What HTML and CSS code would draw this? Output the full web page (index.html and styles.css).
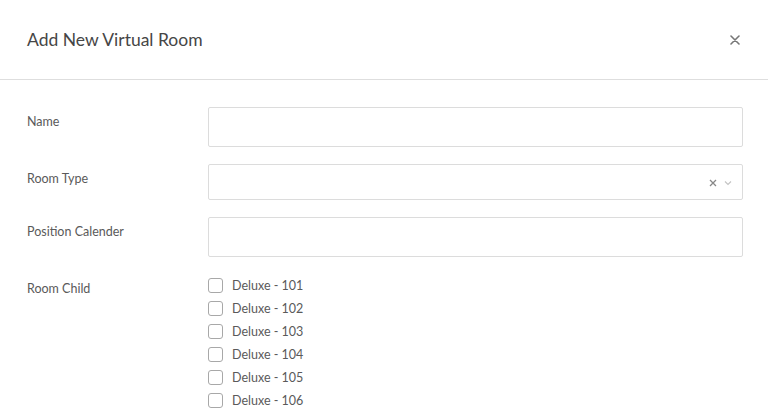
FILE: index.html
```html
<!DOCTYPE html>
<html>
<head>
<meta charset="utf-8">
<link rel="stylesheet" href="styles.css">
</head>
<body>
<div class="modal">
  <div class="modal-header">
    <h2 class="modal-title">Add New Virtual Room</h2>
    <button class="close" aria-label="Close">
      <svg width="10" height="10" viewBox="0 0 10 10"><path d="M1 1L9 9M9 1L1 9" stroke="#777" stroke-width="1.6" stroke-linecap="round"/></svg>
    </button>
  </div>
  <div class="modal-body">
    <div class="form-row">
      <label class="form-label">Name</label>
      <div class="form-field"><input class="input" type="text"></div>
    </div>
    <div class="form-row">
      <label class="form-label">Room Type</label>
      <div class="form-field">
        <div class="select">
          <span class="select-icons">
            <svg class="clear" width="8" height="8" viewBox="0 0 8 8"><path d="M1 1L7 7M7 1L1 7" stroke="#888" stroke-width="1.3"/></svg>
            <svg class="chev" width="8" height="6" viewBox="0 0 8 6"><path d="M1 1.5L4 4.5L7 1.5" fill="none" stroke="#c4c4c4" stroke-width="1.2"/></svg>
          </span>
        </div>
      </div>
    </div>
    <div class="form-row">
      <label class="form-label">Position Calender</label>
      <div class="form-field"><input class="input" type="text"></div>
    </div>
    <div class="form-row">
      <label class="form-label child-label">Room Child</label>
      <div class="form-field checks">
        <label class="check"><span class="box"></span>Deluxe - 101</label>
        <label class="check"><span class="box"></span>Deluxe - 102</label>
        <label class="check"><span class="box"></span>Deluxe - 103</label>
        <label class="check"><span class="box"></span>Deluxe - 104</label>
        <label class="check"><span class="box"></span>Deluxe - 105</label>
        <label class="check"><span class="box"></span>Deluxe - 106</label>
      </div>
    </div>
  </div>
</div>
</body>
</html>
```
FILE: styles.css
```css
html, body {
  margin: 0;
  padding: 0;
  background: #fff;
  font-family: "Lato", "Noto Sans", sans-serif;
  color: #555;
}
.modal {
  width: 768px;
}
.modal-header {
  height: 80px;
  border-bottom: 1px solid #dedede;
  display: flex;
  align-items: center;
  justify-content: space-between;
  padding: 0 28px 0 27px;
  box-sizing: border-box;
}
.modal-title {
  margin: 0;
  font-size: 17.5px;
  font-weight: 400;
  color: #464646;
}
.close {
  border: 0;
  background: none;
  padding: 0;
  width: 10px;
  height: 10px;
  display: flex;
}
.modal-body {
  padding: 27px 25px 0 27px;
  display: flex;
  flex-direction: column;
  gap: 17px;
}
.form-row {
  display: grid;
  grid-template-columns: 181px 535px;
}
.form-label {
  font-size: 12.5px;
  line-height: 14px;
  padding-top: 8px;
  color: #5a5a5a;
}
.input {
  display: block;
  width: 535px;
  height: 40px;
  box-sizing: border-box;
  border: 1px solid #dcdcdc;
  border-radius: 2px;
  margin: 0;
  outline: none;
}
.select {
  height: 36px;
  box-sizing: border-box;
  border: 1px solid #dcdcdc;
  border-radius: 2px;
  display: flex;
  align-items: center;
  justify-content: flex-end;
  padding-right: 10px;
}
.select-icons {
  display: flex;
  align-items: center;
  gap: 7px;
  margin-top: 2px;
}
.child-label {
  padding-top: 8px;
}
.checks {
  display: flex;
  flex-direction: column;
  gap: 8px;
  padding-top: 4px;
}
.check {
  display: flex;
  align-items: center;
  font-size: 12.5px;
  line-height: 14px;
  color: #5a5a5a;
}
.box {
  width: 13px;
  height: 13px;
  border: 1px solid #a8a8a8;
  border-radius: 3px;
  margin-right: 9px;
  flex: none;
}
```
